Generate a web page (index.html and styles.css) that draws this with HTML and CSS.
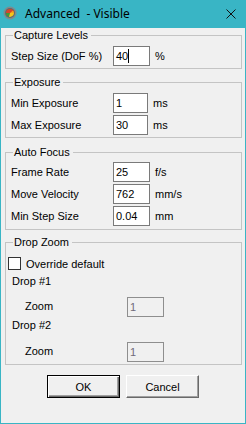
FILE: index.html
```html
<!DOCTYPE html>
<html>
<head>
<meta charset="utf-8">
<link rel="stylesheet" href="styles.css">
</head>
<body>
<div class="window">
  <div class="titlebar">
    <svg class="app-icon" width="14" height="14" viewBox="0 0 14 14">
      <circle cx="7" cy="7" r="6.5" fill="#7d8c8f"/>
      <circle cx="7" cy="7" r="5" fill="#5d6b6e"/>
      <path d="M3 7 A4 4 0 0 1 11 7 Z" fill="#d8432a"/>
      <path d="M7 7 L11 7 A4 4 0 0 0 10 4.4 Z" fill="#f2a51c"/>
      <path d="M3 7 L7 7 L6 10.8 A4 4 0 0 1 3 7 Z" fill="#3e9a37"/>
      <path d="M7 7 L11 7 A4 4 0 0 1 6 10.8 Z" fill="#f5c71a"/>
    </svg>
    <span class="title">Advanced  - Visible</span>
    <svg class="close" width="10" height="10" viewBox="0 0 10 10">
      <path d="M0.5 0.5 L9.5 9.5 M9.5 0.5 L0.5 9.5" stroke="#111" stroke-width="1"/>
    </svg>
  </div>
  <div class="content">
    <fieldset class="group g-capture">
      <legend>Capture Levels</legend>
      <div class="row">
        <span class="label">Step Size (DoF %)</span>
        <span class="field w37">40<span class="caret"></span></span>
        <span class="unit">%</span>
      </div>
    </fieldset>

    <fieldset class="group g-exposure">
      <legend>Exposure</legend>
      <div class="row">
        <span class="label">Min Exposure</span>
        <span class="field w35">1</span>
        <span class="unit u-ms">ms</span>
      </div>
      <div class="row">
        <span class="label">Max Exposure</span>
        <span class="field w35">30</span>
        <span class="unit u-ms">ms</span>
      </div>
    </fieldset>

    <fieldset class="group g-focus">
      <legend>Auto Focus</legend>
      <div class="row">
        <span class="label">Frame Rate</span>
        <span class="field w37">25</span>
        <span class="unit">f/s</span>
      </div>
      <div class="row">
        <span class="label">Move Velocity</span>
        <span class="field w37">762</span>
        <span class="unit">mm/s</span>
      </div>
      <div class="row">
        <span class="label">Min Step Size</span>
        <span class="field w37">0.04</span>
        <span class="unit">mm</span>
      </div>
    </fieldset>

    <fieldset class="group g-drop">
      <legend>Drop Zoom</legend>
      <div class="check-row">
        <span class="checkbox"></span>
        <span>Override default</span>
      </div>
      <div class="drop-title">Drop #1</div>
      <div class="zoom-row z1">
        <span class="zoom-label">Zoom</span>
        <span class="field w37 disabled">1</span>
      </div>
      <div class="drop-title">Drop #2</div>
      <div class="zoom-row z2">
        <span class="zoom-label">Zoom</span>
        <span class="field w37 disabled">1</span>
      </div>
    </fieldset>

    <div class="buttons">
      <div class="btn btn-default">OK</div>
      <div class="btn">Cancel</div>
    </div>
  </div>
</div>
</body>
</html>
```
FILE: styles.css
```css
html, body {
  margin: 0;
  padding: 0;
  background: #f0f0f0;
}

.window {
  width: 246px;
  height: 424px;
  box-sizing: border-box;
  border: 1px solid #39b5c5;
  border-top: none;
  background: #f0f0f0;
  font-family: "Liberation Sans", Arial, sans-serif;
  font-size: 11px;
  color: #000;
  display: flex;
  flex-direction: column;
}

.titlebar {
  height: 28px;
  background: #39b5c5;
  display: flex;
  align-items: center;
  margin: 0 -1px;
  flex: none;
}

.app-icon {
  margin-left: 3px;
  margin-top: -3px;
  flex: none;
}

.title {
  margin-left: 8px;
  font-family: "Noto Sans", "Open Sans", sans-serif;
  font-size: 12px;
  white-space: pre;
  color: #000;
  margin-top: -2px;
}

.close {
  margin-left: auto;
  margin-right: 10px;
  margin-top: -1px;
  flex: none;
}

.content {
  display: flex;
  flex-direction: column;
  padding: 0 3px 0 4px;
}

.group {
  margin: 7px 0 0 0;
  padding: 4px 0 2px 5px;
  border: 1px solid #c4c4c4;
  min-width: 0;
}

.group legend {
  margin-left: 2px;
  padding: 0 3px 0 1px;
  line-height: 13px;
  height: 13px;
}

.g-capture { margin-top: 1px; }
.g-focus { margin-top: 8px; padding-top: 3px; padding-bottom: 3px; }
.g-drop { margin-top: 6px; padding-top: 0; padding-bottom: 2px; }

.row {
  display: flex;
  align-items: center;
  height: 20px;
}
.row + .row { margin-top: 2px; }

.label {
  width: 102px;
  flex: none;
  white-space: nowrap;
}

.field {
  box-sizing: border-box;
  height: 20px;
  border: 1px solid #7a7a7a;
  background: #fff;
  padding-left: 2px;
  display: flex;
  align-items: center;
  flex: none;
}
.w37 { width: 37px; }
.w35 { width: 35px; }

.field.disabled {
  background: #f0f0f0;
  border-color: #8e8e8e;
  color: #6f6a7a;
}

.caret {
  display: inline-block;
  width: 1px;
  height: 14px;
  background: #000;
}

.unit { margin-left: 5px; }
.u-ms { margin-left: 5px; }

.check-row {
  display: flex;
  align-items: center;
  height: 17px;
  margin-top: 6px;
  margin-left: -3px;
}

.checkbox {
  width: 13px;
  height: 13px;
  box-sizing: border-box;
  border: 1px solid #333;
  background: #fff;
  margin-right: 5px;
}

.drop-title {
  height: 16px;
  line-height: 16px;
  margin-left: 1px;
}
.check-row + .drop-title { margin-top: 1px; }

.zoom-row {
  display: flex;
  align-items: center;
  height: 20px;
}
.z1 { margin-top: 8px; }
.z2 { margin-top: 9px; }

.zoom-label {
  width: 102px;
  padding-left: 14px;
  box-sizing: border-box;
  flex: none;
  margin-top: -2px;
}
.zoom-row .field { margin-left: 14px; }

.buttons {
  display: flex;
  justify-content: center;
  gap: 6px;
  margin-top: 10px;
  padding-right: 1px;
}

.btn {
  width: 73px;
  height: 23px;
  box-sizing: border-box;
  display: flex;
  align-items: center;
  justify-content: center;
  background: #f0f0f0;
  border-top: 1px solid #fff;
  border-left: 1px solid #fff;
  border-right: 1px solid #696969;
  border-bottom: 1px solid #696969;
  box-shadow: inset -1px -1px 0 #a0a0a0;
  font-size: 11px;
}

.btn-default {
  border: 1px solid #000;
  box-shadow: inset 1px 1px 0 #fff, inset -1px -1px 0 #696969, inset -2px -2px 0 #a0a0a0;
}
```
